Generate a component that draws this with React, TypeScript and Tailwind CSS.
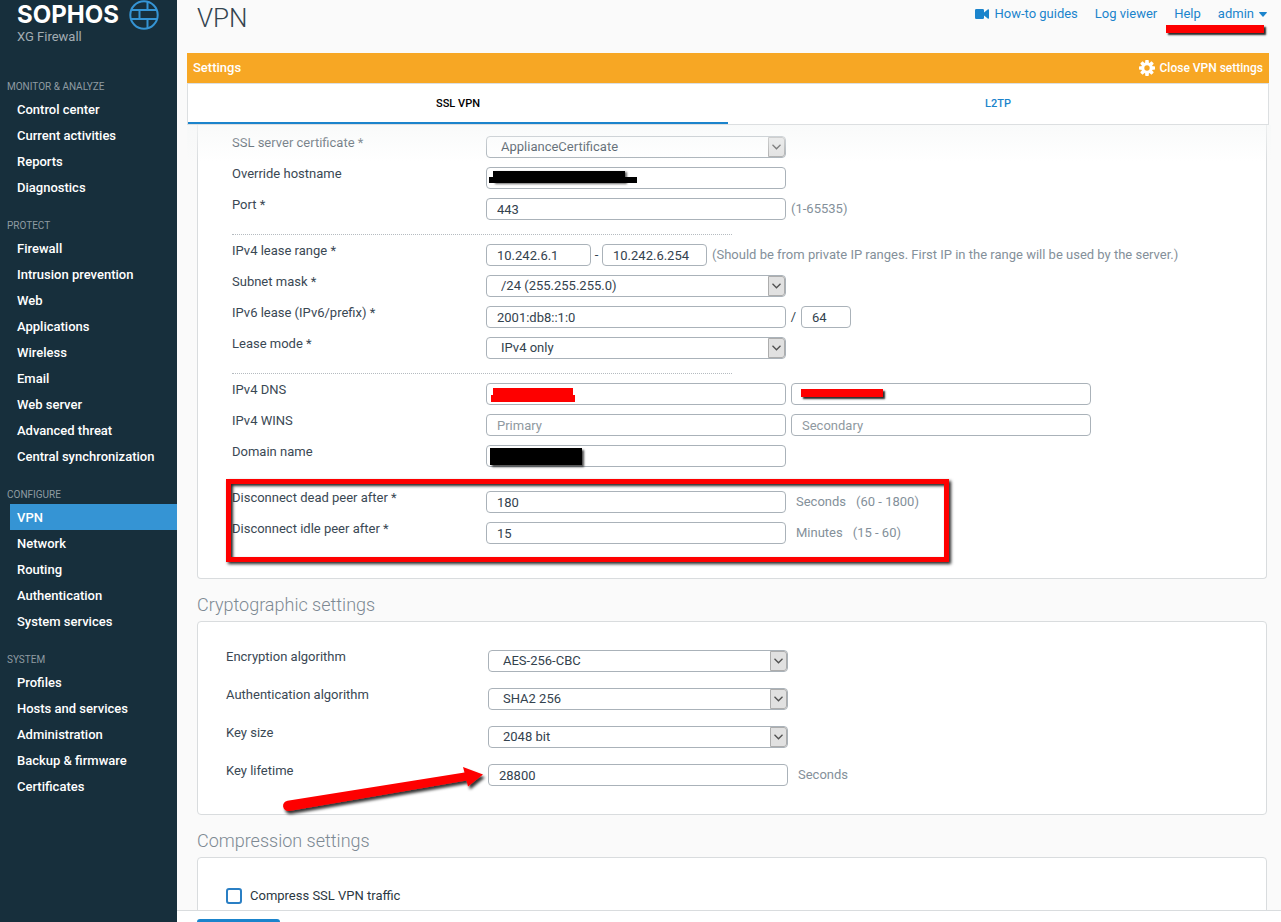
import type { ReactNode } from "react";

type NavGroup = { title: string; items: string[] };

const nav: NavGroup[] = [
  {
    title: "MONITOR & ANALYZE",
    items: ["Control center", "Current activities", "Reports", "Diagnostics"],
  },
  {
    title: "PROTECT",
    items: [
      "Firewall",
      "Intrusion prevention",
      "Web",
      "Applications",
      "Wireless",
      "Email",
      "Web server",
      "Advanced threat",
      "Central synchronization",
    ],
  },
  {
    title: "CONFIGURE",
    items: ["VPN", "Network", "Routing", "Authentication", "System services"],
  },
  {
    title: "SYSTEM",
    items: [
      "Profiles",
      "Hosts and services",
      "Administration",
      "Backup & firmware",
      "Certificates",
    ],
  },
];

const box =
  "block h-[22px] rounded border border-[#aab2b9] bg-white text-[13px] leading-5 text-[#33424e] placeholder:text-[#8f999f] outline-none focus:border-[#1b84cc]";

function GlobeLogo() {
  return (
    <svg viewBox="0 0 30 30" className="h-[30px] w-[30px]" fill="none" stroke="#3594d4" strokeWidth="2" aria-hidden="true">
      <circle cx="15" cy="15" r="13.7" />
      <path d="M2.5 10H27.5M2 19H28M18.5 1.5V10M10.5 10V19M18.5 19V28.5" />
    </svg>
  );
}

function Sidebar() {
  return (
    <aside className="w-[177px] shrink-0 overflow-hidden bg-[#172f3c]">
      <div className="h-[61px] pl-[17px]">
        <div className="flex h-[29px] items-center gap-[10px]">
          <span className="font-[Inter,sans-serif] text-[24px] leading-[29px] font-bold text-white">SOPHOS</span>
          <GlobeLogo />
        </div>
        <p className="text-[13px] leading-4 text-[#a3adb3]">XG Firewall</p>
      </div>
      <nav>
        {nav.map((group) => (
          <section key={group.title}>
            <h2 className="pt-[18px] pb-px pl-[7px] text-[10px] leading-4 text-[#8f9ba2]">{group.title}</h2>
            <ul>
              {group.items.map((item) => (
                <li key={item} className="pl-[10px]">
                  <a
                    href="#"
                    aria-current={item === "VPN" ? "page" : undefined}
                    className={
                      item === "VPN"
                        ? "block bg-[#3594d4] pt-[2px] pl-[7px] text-[13px] leading-6 font-medium text-white"
                        : "block pt-[2px] pl-[7px] text-[13px] leading-6 font-medium text-white"
                    }
                  >
                    {item}
                  </a>
                </li>
              ))}
            </ul>
          </section>
        ))}
      </nav>
    </aside>
  );
}

function Field({ id, label, children }: { id: string; label: string; children: ReactNode }) {
  return (
    <div className="mb-[9px] flex items-start">
      <label htmlFor={id} className="w-[254px] shrink-0 text-[13px] leading-[14px] text-[#3a4854]">
        {label}
      </label>
      <div className="flex items-center">{children}</div>
    </div>
  );
}

function CryptoField({ id, label, children }: { id: string; label: string; children: ReactNode }) {
  return (
    <div className="mb-4 flex items-start">
      <label htmlFor={id} className="w-[262px] shrink-0 text-[13px] leading-[14px] text-[#3a4854]">
        {label}
      </label>
      <div className="flex items-center">{children}</div>
    </div>
  );
}

function Select({ id, value }: { id: string; value: string }) {
  return (
    <div className="relative w-[300px]">
      <select id={id} defaultValue={value} className={`${box} w-full appearance-none pl-[14px]`}>
        <option>{value}</option>
      </select>
      <span className="pointer-events-none absolute top-px right-px flex h-5 w-[17px] items-center justify-center rounded-r-[3px] border border-[#adadad] bg-[#e1e1e1]">
        <svg viewBox="0 0 9 6" className="h-[6px] w-[9px]" fill="none" stroke="#505050" strokeWidth="1.3" aria-hidden="true">
          <path d="M0.5 0.8L4.5 4.8L8.5 0.8" />
        </svg>
      </span>
    </div>
  );
}

function Hint({ children }: { children: ReactNode }) {
  return <span className="text-[13px] leading-5 whitespace-nowrap text-[#84909a]">{children}</span>;
}

function Separator() {
  return <hr className="mt-[14px] mb-[9px] w-[500px] border-t border-dotted border-[#b5bbc0]" />;
}

function SectionTitle({ children }: { children: ReactNode }) {
  return <h2 className="pt-3 pb-[2px] text-[18px] leading-7 font-light text-[#7d8993]">{children}</h2>;
}

function Arrow() {
  return (
    <svg
      viewBox="0 0 210 56"
      className="pointer-events-none absolute top-[139px] left-[82px] h-[56px] w-[210px] overflow-visible"
      aria-hidden="true"
    >
      <defs>
        <filter id="arrow-shadow" x="-10%" y="-20%" width="120%" height="150%">
          <feDropShadow dx="2" dy="3" stdDeviation="1.5" floodColor="#000" floodOpacity="0.8" />
        </filter>
      </defs>
      <path
        filter="url(#arrow-shadow)"
        fill="#fe0000"
        d="M7.5 39.7L184.5 11.5L183 6L203 13.5L188 25.5L186.5 19.5L9 50A5.2 5.2 0 0 1 7.5 39.7Z"
      />
    </svg>
  );
}

function Header() {
  return (
    <header className="flex h-[53px] shrink-0 items-start justify-between pr-[14px] pl-5">
      <h1 className="text-[26px] leading-9 font-light text-[#34444f]">VPN</h1>
      <div className="relative flex items-center gap-[17px] pt-1 text-[13px] leading-5 text-[#1b84cc]">
        <a href="#" className="flex items-center gap-[5px]">
          <svg viewBox="0 0 14 10" className="h-[10px] w-[14px]" fill="currentColor" aria-hidden="true">
            <path d="M1.3 0H7.7Q9 0 9 1.3V3.6L13 0.3Q14 0 14 1V9Q14 10 13 9.7L9 6.4V8.7Q9 10 7.7 10H1.3Q0 10 0 8.7V1.3Q0 0 1.3 0Z" />
          </svg>
          How-to guides
        </a>
        <a href="#">Log viewer</a>
        <a href="#">Help</a>
        <button type="button" className="flex items-center gap-[5px]">
          admin
          <svg viewBox="0 0 8 5" className="h-[5px] w-2" fill="currentColor" aria-hidden="true">
            <path d="M0.5 0H7.5Q8.2 0.3 7.6 1L4.5 4.6Q4 5 3.5 4.6L0.4 1Q-0.2 0.3 0.5 0Z" />
          </svg>
        </button>
        <span className="absolute top-[25px] right-[3px] h-2 w-[98px] bg-[#fe0000] shadow-[2px_2px_2px_rgba(0,0,0,0.85)]" />
      </div>
    </header>
  );
}

export default function App() {
  return (
    <div className="flex h-screen overflow-hidden bg-[#fafafa] font-[Roboto,sans-serif]">
      <Sidebar />
      <div className="flex min-w-0 flex-1 flex-col">
        <Header />
        <div className="mr-[12px] ml-[10px] shrink-0">
          <div className="flex h-[30px] items-center justify-between bg-[#f7a724] px-[6px] text-[13px] font-medium text-white">
            <span>Settings</span>
            <button type="button" className="flex items-center gap-[5px] text-[12px]">
              <svg viewBox="0 0 16 16" className="h-4 w-4" aria-hidden="true">
                <g fill="#fff">
                  <rect x="6.2" y="0" width="3.6" height="16" rx="0.8" />
                  <rect x="6.2" y="0" width="3.6" height="16" rx="0.8" transform="rotate(45 8 8)" />
                  <rect x="6.2" y="0" width="3.6" height="16" rx="0.8" transform="rotate(90 8 8)" />
                  <rect x="6.2" y="0" width="3.6" height="16" rx="0.8" transform="rotate(135 8 8)" />
                  <circle cx="8" cy="8" r="5.8" />
                </g>
                <circle cx="8" cy="8" r="2.7" fill="#f7a724" />
              </svg>
              Close VPN settings
            </button>
          </div>
          <div role="tablist" className="flex h-[42px] border border-[#dcdfe1] bg-white text-[11px] font-medium">
            <button type="button" role="tab" aria-selected="true" className="flex-1 border-b-2 border-[#1b84cc] pt-[2px] text-black">
              SSL VPN
            </button>
            <button type="button" role="tab" aria-selected="false" className="flex-1 border-b-2 border-transparent pt-[2px] text-[#1b84cc]">
              L2TP
            </button>
          </div>
        </div>

        <main className="relative min-h-0 flex-1 overflow-hidden pr-[14px] pl-5">
          <div className="rounded-b border border-t-0 border-[#d9dcde] bg-white pt-[11px] pb-[25px] pl-[34px]">
            <Field id="cert" label="SSL server certificate *">
              <Select id="cert" value="ApplianceCertificate" />
            </Field>
            <Field id="host" label="Override hostname">
              <div className="relative">
                <input id="host" className={`${box} w-[300px] px-[10px]`} />
                <span className="absolute top-[10px] left-[3px] h-[6px] w-[148px] bg-black" />
                <span className="absolute top-1 left-[7px] h-3 w-[132px] bg-black shadow-[2px_1px_2px_rgba(0,0,0,0.6)]" />
              </div>
            </Field>
            <Field id="port" label="Port *">
              <input id="port" defaultValue="443" className={`${box} mr-[5px] w-[300px] px-[10px]`} />
              <Hint>(1-65535)</Hint>
            </Field>

            <Separator />

            <Field id="lease4" label="IPv4 lease range *">
              <input id="lease4" defaultValue="10.242.6.1" className={`${box} w-[105px] px-[10px]`} />
              <span className="w-[11px] text-center text-[13px] leading-5 text-[#33424e]">-</span>
              <input aria-label="IPv4 lease range end" defaultValue="10.242.6.254" className={`${box} mr-[5px] w-[105px] px-[10px]`} />
              <Hint>(Should be from private IP ranges. First IP in the range will be used by the server.)</Hint>
            </Field>
            <Field id="mask" label="Subnet mask *">
              <Select id="mask" value="/24 (255.255.255.0)" />
            </Field>
            <Field id="lease6" label="IPv6 lease (IPv6/prefix) *">
              <input id="lease6" defaultValue="2001:db8::1:0" className={`${box} w-[300px] px-[10px]`} />
              <span className="w-[15px] text-center text-[13px] leading-5 text-[#33424e]">/</span>
              <input aria-label="IPv6 prefix" defaultValue="64" className={`${box} w-[50px] px-[10px]`} />
            </Field>
            <Field id="mode" label="Lease mode *">
              <Select id="mode" value="IPv4 only" />
            </Field>

            <Separator />

            <Field id="dns" label="IPv4 DNS">
              <div className="relative mr-[5px]">
                <input id="dns" className={`${box} w-[300px] px-[10px]`} />
                <span className="absolute top-[5px] left-[7px] h-[10px] w-[80px] bg-[#fe0000]" />
                <span className="absolute top-3 left-[5px] h-[7px] w-[84px] bg-[#fe0000]" />
              </div>
              <div className="relative">
                <input aria-label="Secondary IPv4 DNS" className={`${box} w-[300px] px-[10px]`} />
                <span className="absolute top-[6px] left-[10px] h-2 w-[82px] bg-[#fe0000] shadow-[2px_2px_2px_rgba(0,0,0,0.85)]" />
              </div>
            </Field>
            <Field id="wins" label="IPv4 WINS">
              <input id="wins" placeholder="Primary" className={`${box} mr-[5px] w-[300px] px-[10px]`} />
              <input aria-label="Secondary IPv4 WINS" placeholder="Secondary" className={`${box} w-[300px] px-[10px]`} />
            </Field>
            <Field id="domain" label="Domain name">
              <div className="relative">
                <input id="domain" className={`${box} w-[300px] px-[10px]`} />
                <span className="absolute top-[3px] left-[4px] h-[17px] w-[92px] bg-black shadow-[2px_2px_2px_rgba(0,0,0,0.7)]" />
              </div>
            </Field>

            <div className="relative mt-6">
              <Field id="dead" label="Disconnect dead peer after *">
                <input id="dead" defaultValue="180" className={`${box} mr-[10px] w-[300px] px-[10px]`} />
                <span className="flex gap-[10px]">
                  <Hint>Seconds</Hint>
                  <Hint>(60 - 1800)</Hint>
                </span>
              </Field>
              <Field id="idle" label="Disconnect idle peer after *">
                <input id="idle" defaultValue="15" className={`${box} mr-[10px] w-[300px] px-[10px]`} />
                <span className="flex gap-[10px]">
                  <Hint>Minutes</Hint>
                  <Hint>(15 - 60)</Hint>
                </span>
              </Field>
              <div className="pointer-events-none absolute -top-3 left-[-6px] h-[83px] w-[723px] border-[5px] border-[#fe0000] shadow-[2px_2px_3px_rgba(0,0,0,0.85),inset_2px_2px_3px_rgba(0,0,0,0.85)]" />
            </div>
          </div>

          <SectionTitle>Cryptographic settings</SectionTitle>
          <div className="relative rounded border border-[#d9dcde] bg-white pt-7 pb-3 pl-7">
            <CryptoField id="enc" label="Encryption algorithm">
              <Select id="enc" value="AES-256-CBC" />
            </CryptoField>
            <CryptoField id="auth" label="Authentication algorithm">
              <Select id="auth" value="SHA2 256" />
            </CryptoField>
            <CryptoField id="size" label="Key size">
              <Select id="size" value="2048 bit" />
            </CryptoField>
            <CryptoField id="life" label="Key lifetime">
              <input id="life" defaultValue="28800" className={`${box} mr-[10px] w-[300px] px-[10px]`} />
              <Hint>Seconds</Hint>
            </CryptoField>
            <Arrow />
          </div>

          <SectionTitle>Compression settings</SectionTitle>
          <div className="rounded border border-[#d9dcde] bg-white pt-7 pb-10 pl-7">
            <label className="flex items-center gap-2 text-[13px] leading-5 text-[#2b3842]">
              <input
                type="checkbox"
                className="h-4 w-4 appearance-none rounded-[3px] border-2 border-[#2a7fc4] bg-white checked:bg-[#2a7fc4]"
              />
              Compress SSL VPN traffic
            </label>
          </div>

          <div className="pointer-events-none absolute inset-x-[10px] top-0 h-9 bg-linear-to-b from-[#f6f8f8]/70 to-transparent" />
        </main>

        <footer className="h-3 shrink-0 overflow-hidden border-t border-[#d9dcde] bg-white pt-2 pl-5">
          <button type="button" aria-label="Apply" className="block h-[30px] w-[83px] rounded-[3px] bg-[#1b84cc]" />
        </footer>
      </div>
    </div>
  );
}
